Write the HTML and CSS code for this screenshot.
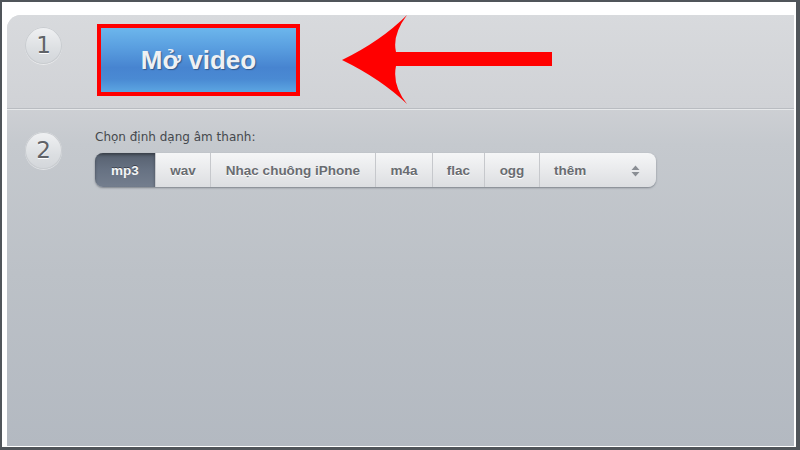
FILE: index.html
```html
<!DOCTYPE html>
<html lang="vi">
<head>
<meta charset="utf-8">
<link rel="stylesheet" href="styles.css">
</head>
<body>
<div class="frame">
  <div class="panel">
    <div class="step step1">
      <div class="num">1</div>
      <div class="btn-wrap"><div class="btn">Mở video</div></div>
      <svg class="arrow" width="220" height="100" viewBox="0 0 220 100">
        <path d="M1,45 Q40,26 66,0 Q51,20 55,37 L211,37 L211,51 L55,51 Q51,70 66,89 Q40,64 1,45 Z" fill="#ff0000"/>
      </svg>
    </div>
    <div class="sep"></div>
    <div class="step step2">
      <div class="num">2</div>
      <div class="body">
        <div class="label">Chọn định dạng âm thanh:</div>
        <div class="seg">
          <div class="item sel w-mp3">mp3</div>
          <div class="item w-wav">wav</div>
          <div class="item w-iph">Nhạc chuông iPhone</div>
          <div class="item w-m4a">m4a</div>
          <div class="item w-flac">flac</div>
          <div class="item w-ogg">ogg</div>
          <div class="item more w-more"><span>thêm</span>
            <svg width="9" height="12" viewBox="0 0 9 12"><path d="M4.5,0.5 L8.5,5 L0.5,5 Z M0.5,7 L8.5,7 L4.5,11.5 Z" fill="#8a8e94"/></svg>
          </div>
        </div>
      </div>
    </div>
  </div>
</div>
</body>
</html>
```
FILE: styles.css
```css
html, body { margin: 0; padding: 0; }
body {
  width: 800px;
  height: 450px;
  background: #50555a;
  overflow: hidden;
}
.frame {
  box-sizing: border-box;
  margin: 2px 4px 0 2px;
  width: 794px;
  height: 445px;
  background: #ffffff;
  padding: 13px 2px 1px 5px;
  display: flex;
}
.panel {
  flex: 1;
  border-top-left-radius: 14px;
  background: linear-gradient(180deg, #d8dadd 0%, #cfd1d5 20%, #c5c9ce 30%, #bcc1c7 60%, #b3b9c1 100%);
  display: flex;
  flex-direction: column;
  overflow: hidden;
}
.step { display: flex; }
.step1 {
  height: 93px;
  box-sizing: border-box;
  padding-top: 9px;
  background: linear-gradient(180deg, #d8dadd, #d0d2d6);
}
.sep {
  height: 1px;
  background: #b9bcc1;
  border-bottom: 1px solid #e6e8ea;
}
.num {
  width: 37px;
  height: 37px;
  margin: 3px 35px 0 18px;
  border-radius: 50%;
  background: linear-gradient(180deg, #f0f1f3 0%, #dcdfe2 60%, #d3d6da 100%);
  box-shadow: inset 0 0 0 1px #c9ccd0, 0 1px 0 rgba(255,255,255,0.5);
  color: #606368;
  font-family: "DejaVu Sans", sans-serif;
  font-weight: normal;
  font-size: 23px;
  line-height: 37px;
  text-align: center;
  text-shadow: 0 1px 0 #ffffff;
  flex: none;
}
.btn-wrap {
  width: 195px;
  height: 64px;
  border: 4px solid #ff0000;
  flex: none;
}
.btn {
  height: 100%;
  background: linear-gradient(180deg, #6cb6ec 0%, #5a9fe0 30%, #4784d0 62%, #4a8ad3 80%, #5ca6e2 100%);
  color: #eef1f4;
  font-family: "Liberation Sans", Arial, sans-serif;
  font-weight: bold;
  font-size: 26px;
  line-height: 64px;
  text-align: center;
  text-shadow: 1px 1px 1px rgba(40,70,110,0.7);
}
.arrow {
  margin: -9px 0 0 41px;
  flex: none;
}
.step2 {
  padding-top: 19px;
}
.body {
  display: flex;
  flex-direction: column;
  margin-left: -2px;
}
.label {
  font-family: "DejaVu Sans", sans-serif;
  font-size: 12px;
  line-height: 16px;
  color: #45484d;
}
.seg {
  margin-top: 8px;
  display: flex;
  height: 34px;
  border-radius: 8px;
  overflow: hidden;
  box-shadow: 0 1px 2px rgba(70,75,85,0.55);
  width: 561px;
}
.item {
  box-sizing: border-box;
  height: 34px;
  display: flex;
  align-items: center;
  justify-content: center;
  background: linear-gradient(180deg, #f5f6f7 0%, #e9eaec 50%, #dcdee1 100%);
  border-left: 1px solid #c6c8cc;
  color: #696c71;
  font-family: "Liberation Sans", Arial, sans-serif;
  font-weight: bold;
  font-size: 13.5px;
  text-shadow: 0 1px 0 #ffffff;
}
.item.sel {
  border-left: none;
  background: linear-gradient(180deg, #56606f 0%, #677283 50%, #747e8e 100%);
  color: #f4f5f7;
  text-shadow: 0 -1px 0 rgba(0,0,0,0.4);
  box-shadow: inset 0 2px 3px rgba(0,0,0,0.35);
}
.item.more {
  justify-content: space-between;
  padding: 0 16px 0 14px;
}
.more svg { margin-top: 2px; }
.w-mp3 { width: 60px; }
.w-wav { width: 55px; }
.w-iph { width: 165px; }
.w-m4a { width: 57px; }
.w-flac { width: 52px; }
.w-ogg { width: 55px; }
.w-more { width: 117px; }
```
